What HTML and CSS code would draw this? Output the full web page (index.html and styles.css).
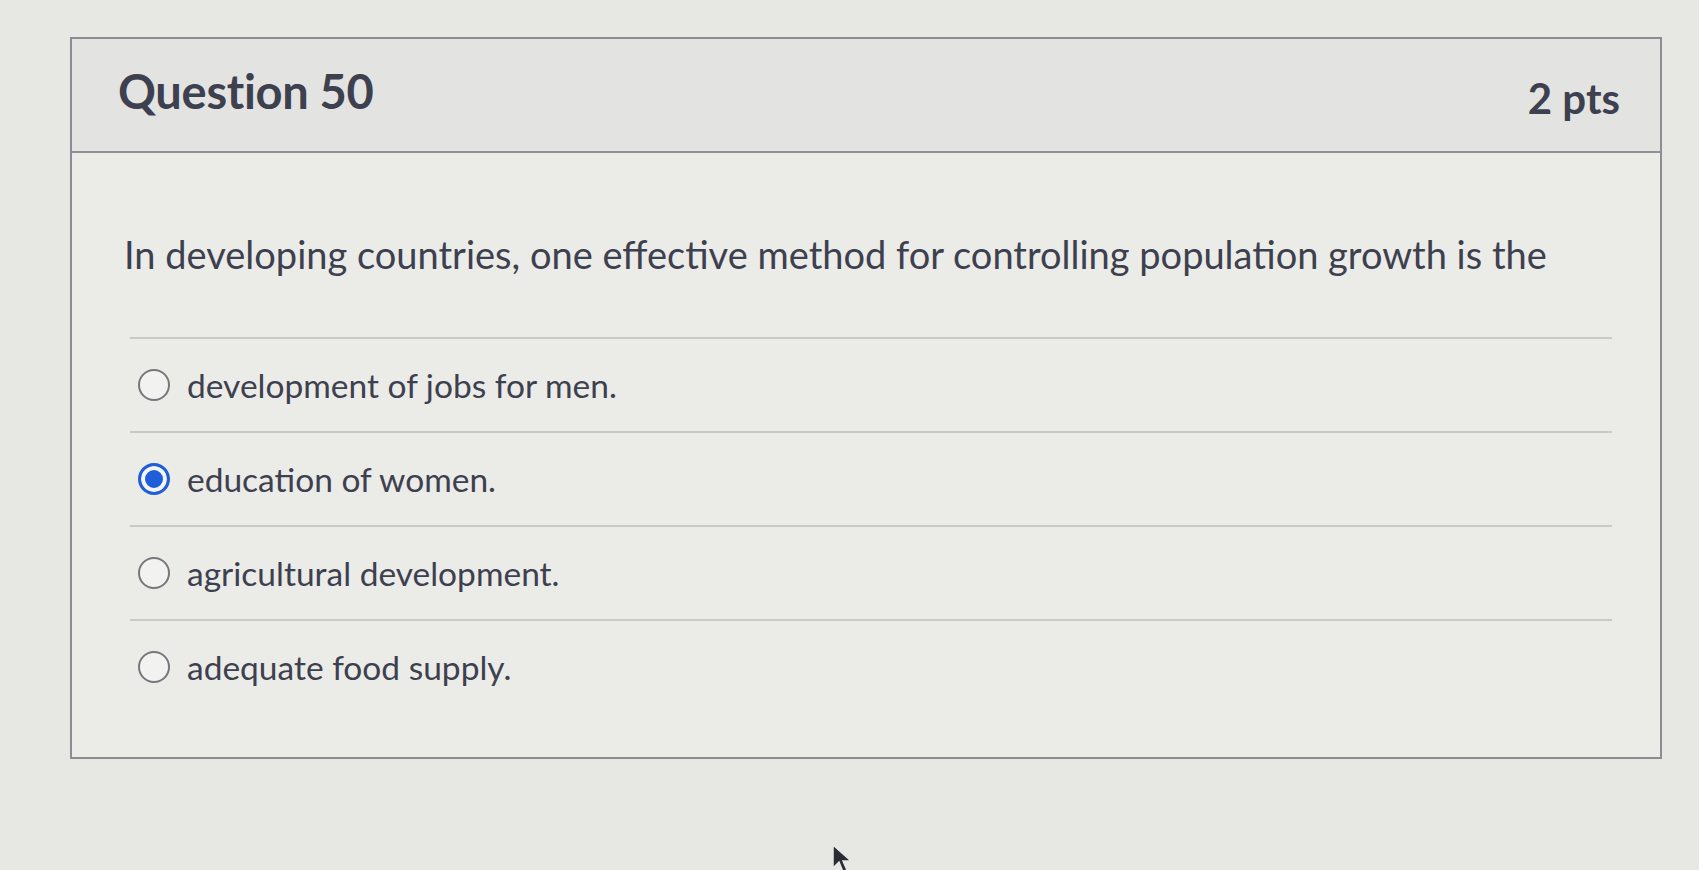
FILE: index.html
```html
<!DOCTYPE html>
<html lang="en">
<head>
<meta charset="utf-8">
<title>Question 50</title>
<link rel="stylesheet" href="styles.css">
</head>
<body>
<div class="card">
  <div class="header">
    <h2 class="title">Question 50</h2>
    <span class="pts">2 pts</span>
  </div>
  <div class="body">
    <p class="question">In developing countries, one effective method for controlling population growth is the</p>
    <div class="answers">
      <label class="answer"><span class="radio"></span><span class="label">development of jobs for men.</span></label>
      <label class="answer"><span class="radio checked"></span><span class="label">education of women.</span></label>
      <label class="answer"><span class="radio"></span><span class="label">agricultural development.</span></label>
      <label class="answer"><span class="radio"></span><span class="label">adequate food supply.</span></label>
    </div>
  </div>
</div>
<svg class="cursor" width="24" height="30" viewBox="0 0 24 30"><path d="M2 1 L2 24 L8 18 L12 28 L16 26 L12 17 L20 17 Z" fill="#2b2c33" stroke="#e8e8e8" stroke-width="1.5"/></svg>
</body>
</html>
```
FILE: styles.css
```css
html, body {
  margin: 0;
  padding: 0;
}
body {
  background: #e7e7e3;
  font-family: Lato, "Open Sans", "Liberation Sans", sans-serif;
  color: #3d404e;
  height: 870px;
  overflow: hidden;
  position: relative;
}
.card {
  margin: 37px 0 0 70px;
  width: 1592px;
  border: 2px solid #8c8c93;
  background: #ebebe8;
  box-sizing: border-box;
}
.header {
  height: 114px;
  box-sizing: border-box;
  background: #e3e3e1;
  border-bottom: 2px solid #8f8f95;
  display: flex;
  align-items: center;
  justify-content: space-between;
  padding: 0 40px 0 46px;
}
.title {
  margin: -8px 0 0 0;
  font-size: 47px;
  font-weight: 700;
  letter-spacing: -0.3px;
}
.pts {
  font-size: 42px;
  font-weight: 700;
  margin-top: 6px;
}
.body {
  padding: 76px 48px 44px 52px;
}
.question {
  margin: 0 0 58px 0;
  font-size: 38px;
  line-height: 50px;
}
.answers {
  margin-left: 6px;
}
.answer {
  display: flex;
  align-items: center;
  height: 94px;
  border-top: 2px solid #c9c9c8;
  box-sizing: border-box;
  padding-left: 8px;
  gap: 17px;
}
.radio {
  width: 32px;
  height: 32px;
  box-sizing: border-box;
  border: 2px solid #77777c;
  border-radius: 50%;
  background: #f2f2f0;
  flex: none;
}
.radio.checked {
  border: 3px solid #1f5ed8;
  background: #1f5ed8;
  box-shadow: inset 0 0 0 4px #f4f4f4;
}
.label {
  font-size: 33.5px;
}
.cursor {
  position: absolute;
  left: 831px;
  top: 844px;
}
```
